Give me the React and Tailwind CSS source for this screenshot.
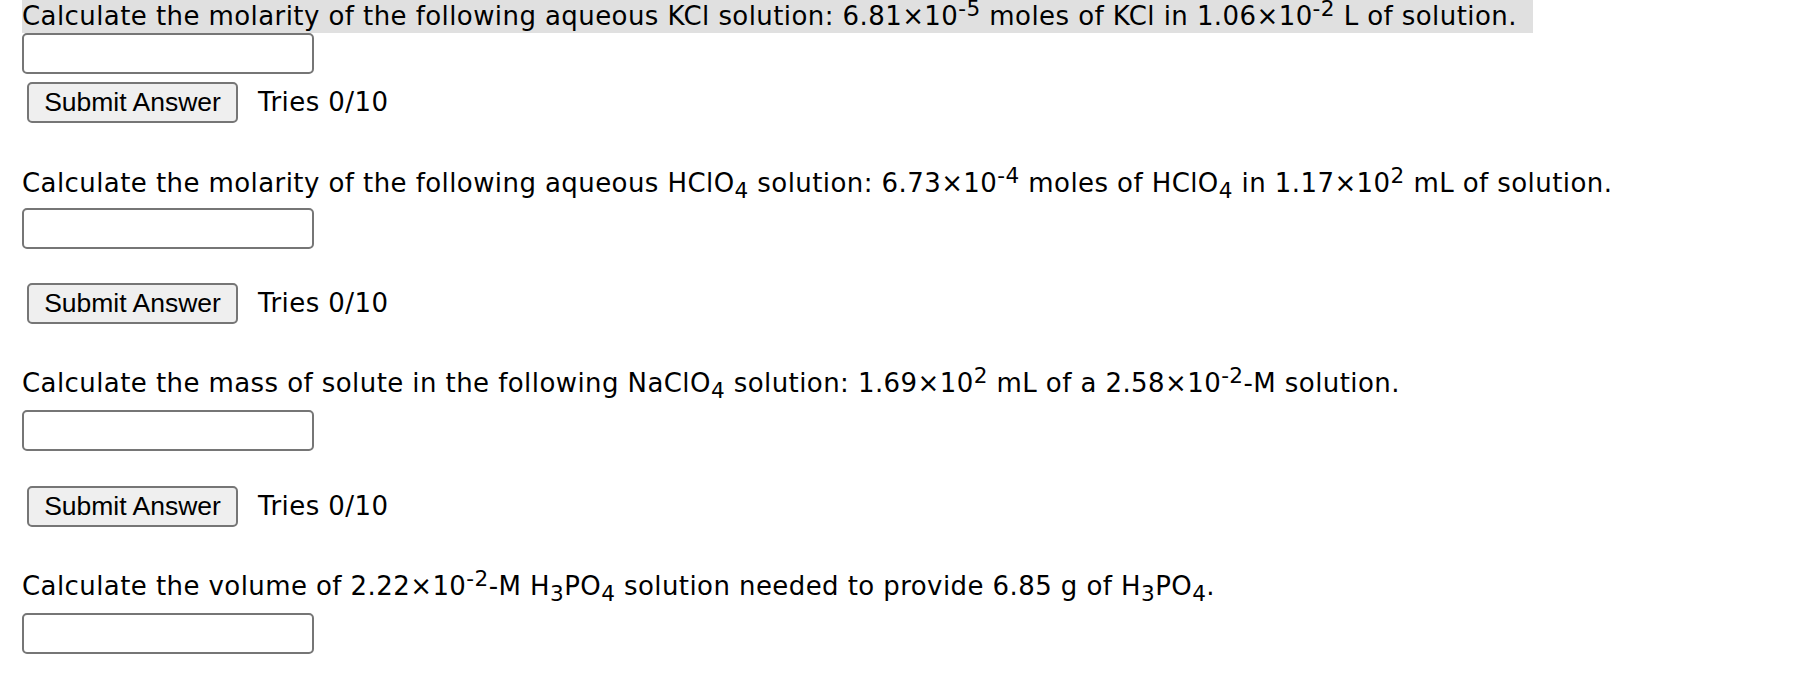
import React from 'react';

const TEXT_FONT = "font-['DejaVu_Sans',Verdana,sans-serif]";
const BTN_FONT = "font-['Liberation_Sans',Arial,sans-serif]";

function Sup({ children }) {
  return <sup className="relative top-[-0.42em] text-[0.83em] leading-none">{children}</sup>;
}

function Sub({ children }) {
  return <sub className="relative bottom-[-0.28em] text-[0.83em] leading-none">{children}</sub>;
}

function AnswerBox({ className = '' }) {
  return (
    <input
      type="text"
      className={`block w-[292px] h-[41px] border-2 border-[#767676] rounded-[5px] bg-white outline-none ${className}`}
    />
  );
}

function SubmitRow({ className = '' }) {
  return (
    <div className={`flex items-center h-[41px] ${className}`}>
      <button
        type="button"
        className={`ml-[5px] w-[211px] h-[41px] border-2 border-[#767676] rounded-[5px] bg-[#efefef] text-black text-[26.5px] tracking-normal leading-none ${BTN_FONT}`}
      >
        Submit Answer
      </button>
      <span className="ml-[20px]">Tries 0/10</span>
    </div>
  );
}

export default function App() {
  return (
    <div className={`min-h-[680px] bg-white text-black pl-[22px] text-[26px] tracking-[0.42px] ${TEXT_FONT}`}>
      <div className="h-[33px] leading-[33px] whitespace-nowrap">
        <span className="inline-block h-[33px] bg-[#e0e0e0] pr-[16px]">
          Calculate the molarity of the following aqueous KCl solution: 6.81×10<Sup>-5</Sup> moles of KCl in
          1.06×10<Sup>-2</Sup> L of solution.
        </span>
      </div>
      <AnswerBox />
      <SubmitRow className="mt-[8px]" />

      <div className="mt-[44px] h-[33px] leading-[33px] whitespace-nowrap">
        Calculate the molarity of the following aqueous HClO<Sub>4</Sub> solution: 6.73×10<Sup>-4</Sup> moles of
        HClO<Sub>4</Sub> in 1.17×10<Sup>2</Sup> mL of solution.
      </div>
      <AnswerBox className="mt-[8px]" />
      <SubmitRow className="mt-[34px]" />

      <div className="mt-[43px] h-[33px] leading-[33px] whitespace-nowrap">
        Calculate the mass of solute in the following NaClO<Sub>4</Sub> solution: 1.69×10<Sup>2</Sup> mL of a
        2.58×10<Sup>-2</Sup>-M solution.
      </div>
      <AnswerBox className="mt-[10px]" />
      <SubmitRow className="mt-[35px]" />

      <div className="mt-[43px] h-[33px] leading-[33px] whitespace-nowrap">
        Calculate the volume of 2.22×10<Sup>-2</Sup>-M H<Sub>3</Sub>PO<Sub>4</Sub> solution needed to provide 6.85 g
        of H<Sub>3</Sub>PO<Sub>4</Sub>.
      </div>
      <AnswerBox className="mt-[10px]" />
    </div>
  );
}
